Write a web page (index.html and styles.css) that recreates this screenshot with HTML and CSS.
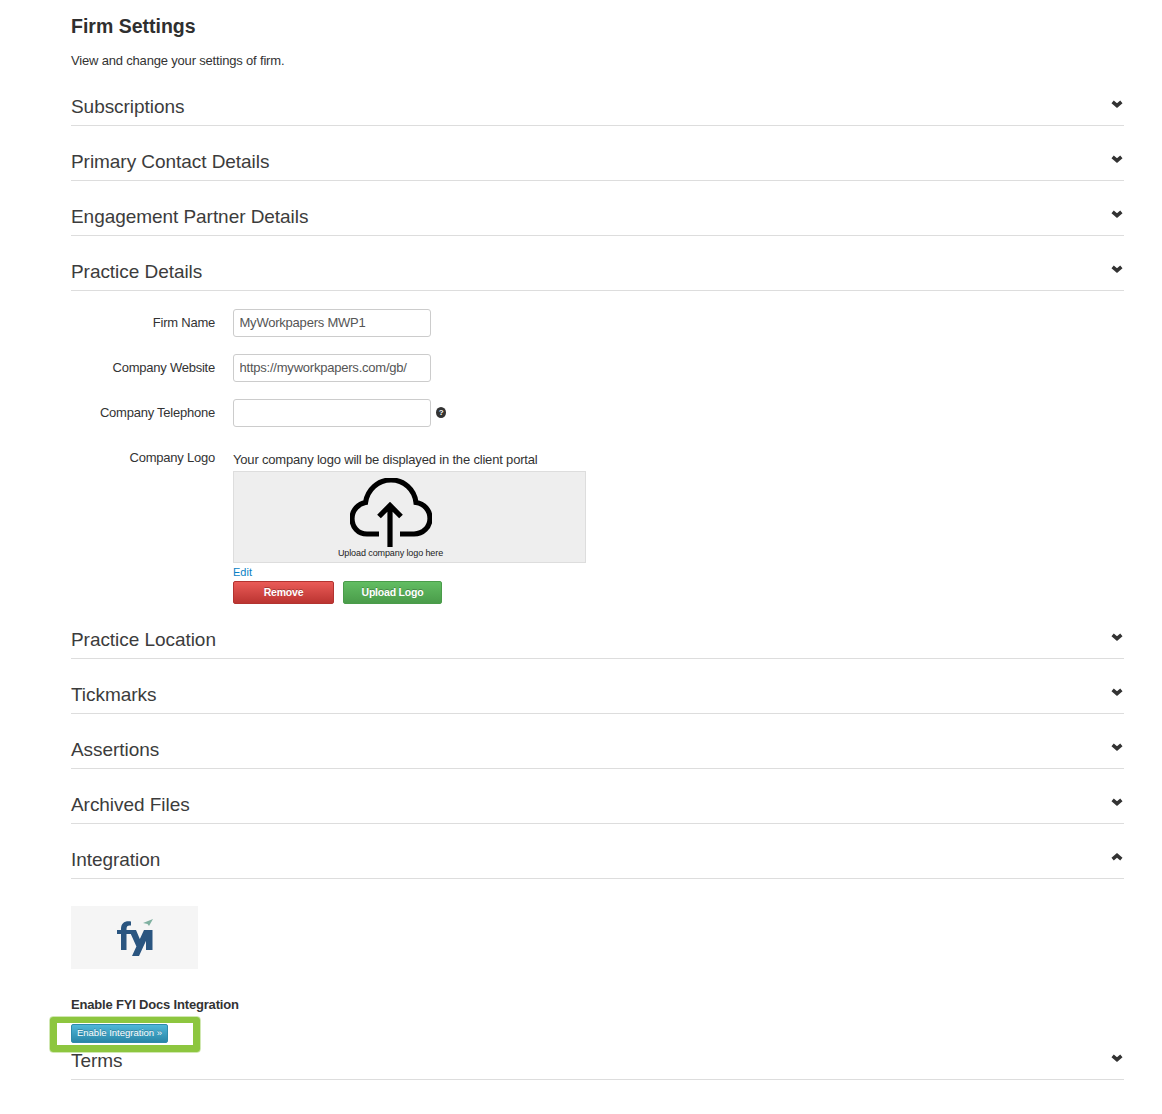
FILE: index.html
```html
<!DOCTYPE html>
<html lang="en">
<head>
<meta charset="utf-8">
<title>Firm Settings</title>
<link rel="stylesheet" href="styles.css">
</head>
<body>
<main class="page">
  <h1 class="title">Firm Settings</h1>
  <p class="intro">View and change your settings of firm.</p>

  <div class="row"><h2 class="row-title">Subscriptions</h2><svg class="chev" viewBox="0 0 11 7"><path d="M1.5 1.500l4 3.500 4-3.500"/></svg></div>
  <div class="row"><h2 class="row-title">Primary Contact Details</h2><svg class="chev" viewBox="0 0 11 7"><path d="M1.5 1.500l4 3.500 4-3.500"/></svg></div>
  <div class="row"><h2 class="row-title">Engagement Partner Details</h2><svg class="chev" viewBox="0 0 11 7"><path d="M1.5 1.500l4 3.500 4-3.500"/></svg></div>
  <div class="row"><h2 class="row-title">Practice Details</h2><svg class="chev" viewBox="0 0 11 7"><path d="M1.5 1.500l4 3.500 4-3.500"/></svg></div>

  <section class="form">
    <div class="field"><label class="label">Firm Name</label><input class="input" type="text" value="MyWorkpapers MWP1"></div>
    <div class="field"><label class="label">Company Website</label><input class="input" type="text" value="https://myworkpapers.com/gb/"></div>
    <div class="field"><label class="label">Company Telephone</label><input class="input" type="text"><span class="help">?</span></div>
    <div class="field field-logo">
      <label class="label">Company Logo</label>
      <div class="logo-col">
        <div class="logo-note">Your company logo will be displayed in the client portal</div>
        <div class="dropzone">
          <svg class="cloud" viewBox="0 0 82 70"><path d="M29 56H17C8 56 2 49 2 40.500C2 32 8.500 25.500 15.500 24.500C17.500 11.500 28 2 41 2C54 2 64.500 11.500 66 24.500C74 25.500 80 32 80 40.500C80 49 73 56 64 56H50"/><path d="M40 69V30M29 38.500L40 27.500L51 38.500"/></svg>
          <span class="drop-text">Upload company logo here</span>
        </div>
        <a class="edit" href="#">Edit</a>
        <div class="actions">
          <button class="btn btn-red" type="button">Remove</button>
          <button class="btn btn-green" type="button">Upload Logo</button>
        </div>
      </div>
    </div>
  </section>

  <div class="row"><h2 class="row-title">Practice Location</h2><svg class="chev" viewBox="0 0 11 7"><path d="M1.5 1.500l4 3.500 4-3.500"/></svg></div>
  <div class="row"><h2 class="row-title">Tickmarks</h2><svg class="chev" viewBox="0 0 11 7"><path d="M1.5 1.500l4 3.500 4-3.500"/></svg></div>
  <div class="row"><h2 class="row-title">Assertions</h2><svg class="chev" viewBox="0 0 11 7"><path d="M1.5 1.500l4 3.500 4-3.500"/></svg></div>
  <div class="row"><h2 class="row-title">Archived Files</h2><svg class="chev" viewBox="0 0 11 7"><path d="M1.5 1.500l4 3.500 4-3.500"/></svg></div>
  <div class="row"><h2 class="row-title">Integration</h2><svg class="chev" viewBox="0 0 11 7"><path d="M1.5 5.500l4-3.500 4 3.500"/></svg></div>

  <section class="integration">
    <div class="fyi-box">
      <svg class="fyi" viewBox="0 0 38 38">
        <path class="fyi-mark" d="M5 31V15H1V11H5V10C5 4 9 1.500 15 2.500V6.500C12 6 10.500 7 10.500 10V11H15V15H10.500V31Z"/>
        <path class="fyi-mark" d="M13 11H20L25.500 24L22 31ZM28 11H35L23 37H16Z"/>
        <path class="fyi-mark" d="M30 11H36.500V31H30Z"/>
        <path class="fyi-plane" d="M27 4L37 0L33 7L31.500 5Z"/>
      </svg>
    </div>
    <div class="enable-label">Enable FYI Docs Integration</div>
    <div class="callout"><button class="btn-blue" type="button">Enable Integration »</button></div>
  </section>

  <div class="row"><h2 class="row-title">Terms</h2><svg class="chev" viewBox="0 0 11 7"><path d="M1.5 1.500l4 3.500 4-3.500"/></svg></div>
</main>
</body>
</html>
```
FILE: styles.css
```css
* { box-sizing: border-box; }
html, body { margin: 0; background: #fff; }
body { font-family: "Liberation Sans", Arial, sans-serif; color: #333; font-size: 13px; letter-spacing: -0.18px; }
.page { padding: 14px 38px 34px 71px; }
.title { margin: 0; font-size: 19.5px; line-height: 24px; font-weight: 700; color: #2f2f2f; letter-spacing: 0; }
.intro { margin: 13px 0 0; font-size: 13px; line-height: 20px; color: #333; }
.row { height: 55px; padding: 21px 0 3px; border-bottom: 1px solid #ddd; display: flex; justify-content: space-between; }
.row-title { margin: 0; font-size: 19px; line-height: 30px; font-weight: 400; color: #3c3c3c; letter-spacing: -0.05px; }
.chev { width: 12px; height: 8px; margin: 8px 1px 0 0; fill: none; stroke: #333; stroke-width: 3.200; }
.form { padding-top: 18px; }
.field { display: flex; align-items: center; height: 28px; margin-bottom: 17px; }
.label { width: 144px; margin-right: 18px; padding-bottom: 2px; text-align: right; color: #333; font-size: 13px; letter-spacing: -0.23px; }
.input { width: 198px; height: 28px; padding: 0 5.500px 2px; border: 1px solid #ccc; border-radius: 3px; font: 13px "Liberation Sans", Arial, sans-serif; letter-spacing: -0.22px; color: #555; background: #fff; }
.help { width: 10px; height: 11px; margin: 0 0 2px 5px; border-radius: 50%; background: #333; color: #fff; font-size: 8px; font-weight: 700; line-height: 11px; text-align: center; }
.field-logo { align-items: flex-start; height: auto; margin: 0; }
.field-logo .label { line-height: 16px; margin-top: 6px; }
.logo-col { padding-top: 6px; }
.logo-note { line-height: 20px; color: #333; }
.dropzone { width: 353px; height: 92px; margin-top: 1px; padding: 6px 38px 0 0; background: #eee; border: 1px solid #ddd; display: flex; flex-direction: column; align-items: center; }
.cloud { width: 82px; height: 70px; fill: none; stroke: #000; stroke-width: 5.200; flex: none; }
.drop-text { margin-top: -1px; font-size: 9px; line-height: 12px; color: #222; letter-spacing: -0.1px; }
.edit { display: block; margin-top: 3px; font-size: 11px; line-height: 12px; color: #0a7fc4; text-decoration: none; letter-spacing: 0; }
.actions { display: flex; gap: 9px; margin-top: 3px; }
.btn { height: 23px; padding: 0 0 2px; border-radius: 2px; font: 700 10.500px "Liberation Sans", Arial, sans-serif; letter-spacing: -0.2px; color: #fff; text-shadow: 0 -1px 0 rgba(0,0,0,.25); }
.btn-red { width: 101px; border: 1px solid #b33330; background: linear-gradient(#ea5b57, #bb3431); }
.btn-green { width: 99px; border: 1px solid #4a9c4a; background: linear-gradient(#62bd62, #4a9c4a); }
.integration { position: relative; padding: 27px 0 10px; }
.fyi-box { width: 127px; height: 63px; background: #f5f5f5; padding: 13px 0 0 45px; }
.fyi { display: block; width: 38px; height: 38px; }
.fyi-mark { fill: #2a5580; }
.fyi-plane { fill: #7fb0a0; }
.enable-label { margin-top: 26px; font-size: 13px; line-height: 20px; font-weight: 700; color: #333; letter-spacing: -0.18px; }
.callout { position: absolute; left: -21px; top: 138px; width: 150px; height: 35px; padding: 1px 0 0 14px; border-style: solid; border-width: 6px 7px 7px; border-color: #8dc63f; border-radius: 3px; background: #fff; outline: 1px solid rgba(141,198,63,.4); }
.btn-blue { display: block; width: 97px; height: 19px; padding: 0 0 2px; border: 1px solid #2f8bab; border-radius: 2px; background: linear-gradient(#4fb7d8, #2a86a8); color: #fff; font: 9.500px "Liberation Sans", Arial, sans-serif; letter-spacing: 0; text-shadow: 0 -1px 0 rgba(0,0,0,.25); }
```
